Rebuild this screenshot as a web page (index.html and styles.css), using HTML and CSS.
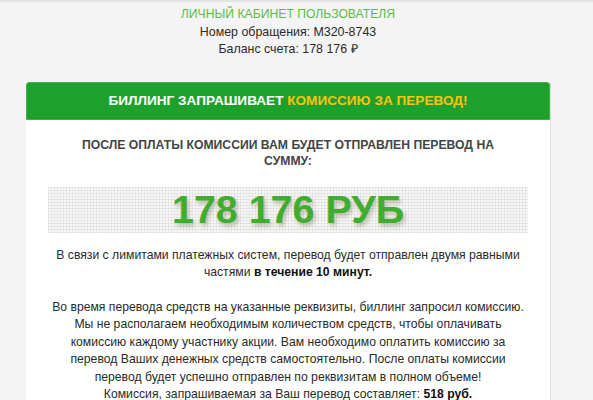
FILE: index.html
```html
<!DOCTYPE html>
<html lang="ru">
<head>
<meta charset="utf-8">
<title>Личный кабинет</title>
<link rel="stylesheet" href="styles.css">
</head>
<body>
<div class="top">
  <div class="top-title">ЛИЧНЫЙ КАБИНЕТ ПОЛЬЗОВАТЕЛЯ</div>
  <div>Номер обращения: М320-8743</div>
  <div>Баланс счета: 178 176 ₽</div>
</div>
<div class="card">
  <div class="card-head">БИЛЛИНГ ЗАПРАШИВАЕТ <span class="yellow">КОМИССИЮ ЗА ПЕРЕВОД!</span></div>
  <div class="card-body">
    <div class="subtitle">ПОСЛЕ ОПЛАТЫ КОМИССИИ ВАМ БУДЕТ ОТПРАВЛЕН ПЕРЕВОД НА СУММУ:</div>
    <div class="amount-box"><span class="amount">178 176 РУБ</span></div>
    <p class="text">В связи с лимитами платежных систем, перевод будет отправлен двумя равными частями <b>в течение 10 минут.</b></p>
    <p class="text">Во время перевода средств на указанные реквизиты, биллинг запросил комиссию. Мы не располагаем необходимым количеством средств, чтобы оплачивать комиссию каждому участнику акции. Вам необходимо оплатить комиссию за перевод Ваших денежных средств самостоятельно. После оплаты комиссии перевод будет успешно отправлен по реквизитам в полном объеме!<br>Комиссия, запрашиваемая за Ваш перевод составляет: <b>518 руб.</b></p>
  </div>
</div>
</body>
</html>
```
FILE: styles.css
```css
html, body {
  margin: 0;
  padding: 0;
}
body {
  background: #f4f4f4;
  border-top: 2px solid #e1e5ea;
  font-family: "Liberation Sans", Arial, sans-serif;
  font-size: 12.2px;
  color: #2a2a2a;
}
.top {
  width: 576px;
  text-align: center;
  line-height: 17.5px;
  padding-top: 4px;
  font-size: 12.4px;
}
.top-title {
  color: #5dba4e;
  font-size: 12.2px;
}
.card {
  margin: 23px 0 0 26px;
  width: 524px;
  background: #fff;
  border-right: 1px solid #dedede;
  min-height: 400px;
}
.card-head {
  height: 36px;
  line-height: 36px;
  background: #1ea02c;
  border: 1px solid #3fb34a;
  border-radius: 3px 3px 0 0;
  color: #fff;
  font-weight: bold;
  font-size: 13.6px;
  text-align: center;
}
.yellow {
  color: #ffc20e;
}
.card-body {
  padding: 17px 22px 0;
  text-align: center;
}
.subtitle {
  font-weight: bold;
  font-size: 12.2px;
  line-height: 16px;
  color: #444;
  padding: 0 22px;
}
.amount-box {
  margin-top: 18px;
  height: 46px;
  background-color: #f7f7f7;
  background-image:
    repeating-linear-gradient(90deg, rgba(0,0,0,0.06) 0 1px, transparent 1px 3px),
    repeating-linear-gradient(0deg, rgba(0,0,0,0.06) 0 1px, transparent 1px 3px);
  display: flex;
  align-items: center;
  justify-content: center;
}
.amount {
  font-size: 39.4px;
  font-weight: bold;
  color: #40ad31;
  text-shadow: 2px 3px 4px rgba(80, 70, 0, 0.32);
}
.text {
  margin: 14px 0 0;
  line-height: 17.5px;
}
.text + .text {
  margin-top: 17px;
}
.text b {
  color: #111;
}
```
